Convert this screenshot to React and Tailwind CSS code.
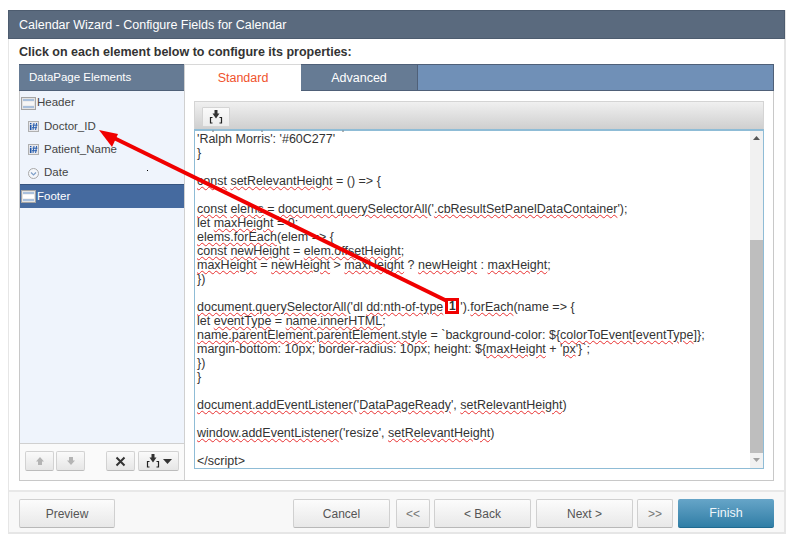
import React from "react";

const codeLines = [
  "'Ralph Morris': '#60C277'",
  "}",
  "",
  "[const] [setRelevantHeight] = () => {",
  "",
  "[const] [elems] = [document.querySelectorAll]('[.cbResultSetPanelDataContainer]');",
  "let [maxHeight] = 0;",
  "[elems.forEach](elem => {",
  "[const] [newHeight] = [elem.offsetHeight];",
  "[maxHeight] = [newHeight] > [maxHeight] ? [newHeight] : [maxHeight];",
  "})",
  "",
  "[document.querySelectorAll]('dl [dd:nth-of-type]{1}').[forEach](name => {",
  "let [eventType] = [name.innerHTML];",
  "[name.parentElement.parentElement.style] = `background-color: ${[colorToEvent][[eventType]]};",
  "margin-bottom: 10px; border-radius: 10px; height: ${[maxHeight] + '[px]'}`;",
  "})",
  "}",
  "",
  "[document.addEventListener]('[DataPageReady]', [setRelevantHeight])",
  "",
  "[window.addEventListener]('resize', [setRelevantHeight])",
  "",
  "</script>",
];

const CodeLine = ({ text }) => {
  const parts = text.split(/(\[[A-Za-z.:\-]+\]|\{1\})/);
  return (
    <div className="h-[14px] whitespace-pre">
      {parts.map((part, i) => {
        if (part === "{1}") {
          return (
            <span
              key={i}
              className="inline-block align-top w-[14px] h-[16px] -mt-[2px] ml-[2px] mr-[1px] border-[3px] border-[#f00000] bg-white text-center leading-[10px] font-bold text-[12px] text-[#333]"
            >
              1
            </span>
          );
        }
        if (/^\[[A-Za-z.:\-]+\]$/.test(part)) {
          return (
            <span
              key={i}
              className="underline decoration-wavy decoration-[#e83030] decoration-1 underline-offset-[1px]"
            >
              {part.slice(1, -1)}
            </span>
          );
        }
        return <span key={i}>{part}</span>;
      })}
    </div>
  );
};

const InsertIcon = () => (
  <svg width="14" height="14" viewBox="0 0 14 14" className="shrink-0">
    <path
      d="M3.5 7.5H1.5v5.5h2M10.5 7.5h2v5.5h-2"
      fill="none"
      stroke="#222"
      strokeWidth="1.2"
    />
    <path d="M5.5 0h3v3.5H10.5L7 8.5 3.5 3.5h2z" fill="#333" />
  </svg>
);

const SectionIcon = ({ light }) => (
  <svg width="15" height="13" viewBox="0 0 15 13" className="shrink-0">
    <rect x="0.5" y="0.5" width="14" height="12" fill="#e4e4e4" stroke="#a4a4a4" />
    <rect x="2" y="2" width="11" height="2" fill="#a9c0dc" />
    <rect x="2" y="9" width="11" height="2" fill="#a9c0dc" />
    <rect x="2" y="4.5" width="11" height="4" fill={light ? "#fff" : "#f6f6f6"} />
  </svg>
);

const FieldIcon = () => (
  <svg width="11" height="11" viewBox="0 0 11 11" className="shrink-0">
    <rect x="0.5" y="0.5" width="10" height="10" fill="#e8e8ec" stroke="#b0b0b0" />
    <path d="M2.7 4v5" stroke="#1f56a8" strokeWidth="1.6" />
    <path d="M2.7 2v1.2" stroke="#1f56a8" strokeWidth="1.4" />
    <path d="M5 9 6 2M7.6 9 8.6 2M4.5 4.2h5M4 6.7h5" stroke="#2a60b0" strokeWidth="1" />
  </svg>
);

const DateIcon = () => (
  <svg width="11" height="11" viewBox="0 0 11 11" className="shrink-0">
    <circle cx="5.5" cy="5.5" r="5" fill="#f4f7fb" stroke="#a8a8a8" />
    <path d="M3 4.5l2.5 2.5L8 4.5" fill="none" stroke="#7f9fc8" strokeWidth="1.2" />
  </svg>
);

const SmallButton = ({ className, children }) => (
  <button className={`flex items-center justify-center h-[20px] rounded-[2px] border border-[#d2d2d2] border-b-[#bcbcbc] bg-gradient-to-b from-[#fafafa] to-[#e6e6e6] ${className}`}>
    {children}
  </button>
);

const FooterButton = ({ className, children }) => (
  <button className={`h-[29px] pt-px rounded-[2px] border border-[#d0d0d0] border-b-[#b8b8b8] bg-gradient-to-b from-[#fcfcfc] to-[#e8e8e8] text-[12px] text-[#555] ${className}`}>
    {children}
  </button>
);

const App = () => {
  return (
    <div className="relative w-[795px] h-[544px] bg-white pt-[10px] pl-[8px] font-['Liberation_Sans',Arial,sans-serif] text-[#333] overflow-hidden">
      <div className="w-[778px] h-[524px] flex flex-col border-r-2 border-l border-b-2 border-[#e6e6e6]">
        <div className="h-[29px] pt-px -ml-px -mr-[1px] shrink-0 flex items-center pl-[10px] bg-[#5a6a7e] border border-[#4d5c6f] text-white text-[12.5px]">
          Calendar Wizard - Configure Fields for Calendar
        </div>

        <div className="flex-1 flex flex-col pl-[10px] pr-[10px]">
          <div className="h-[25px] shrink-0 flex items-center font-bold text-[12.5px] text-[#333] pt-px">
            Click on each element below to configure its properties:
          </div>

          <div className="w-[755px] h-[417px] flex border-b border-l border-r border-[#c8c8c8]">
            <div className="w-[165px] flex flex-col border-r border-[#d0d0d0] bg-[#fafafa]">
              <div className="h-[27px] shrink-0 -ml-px flex items-center pl-[10px] bg-[#667b94] border-t border-b border-[#4f6078] text-white text-[11.5px]">
                DataPage Elements
              </div>
              <div className="h-[353px] shrink-0 bg-[#eff4fc] border-b border-[#d0d0d0] text-[11.5px] text-[#444]">
                <div className="h-[23px] pt-px flex items-center gap-[1px] pl-[1px]">
                  <SectionIcon />
                  <span>Header</span>
                </div>
                <div className="h-[23px] pt-[2px] flex items-center gap-[5px] pl-[8px]">
                  <FieldIcon />
                  <span>Doctor_ID</span>
                </div>
                <div className="h-[23px] pt-[2px] flex items-center gap-[5px] pl-[8px]">
                  <FieldIcon />
                  <span>Patient_Name</span>
                </div>
                <div className="relative h-[24px] pt-[2px] flex items-center gap-[5px] pl-[8px]">
                  <DateIcon />
                  <span>Date</span>
                  <span className="absolute left-[127px] top-[10px] w-px h-px bg-black"></span>
                </div>
                <div className="h-[24px] flex items-center gap-[1px] pl-[1px] bg-[#456a9f] border-t border-[#36547f] text-white">
                  <SectionIcon light />
                  <span>Footer</span>
                </div>
              </div>
              <div className="flex-1 flex items-start pt-[7px] pl-[5px]">
                <SmallButton className="w-[29px]">
                  <svg width="10" height="10" viewBox="0 0 10 10">
                    <path d="M5 1l4 4.5H7V9H3V5.5H1z" fill="#b4b4b4" />
                  </svg>
                </SmallButton>
                <SmallButton className="w-[29px] ml-[2px]">
                  <svg width="10" height="10" viewBox="0 0 10 10">
                    <path d="M5 9L1 4.5h2V1h4v3.5h2z" fill="#b4b4b4" />
                  </svg>
                </SmallButton>
                <SmallButton className="w-[29px] ml-[21px]">
                  <svg width="11" height="11" viewBox="0 0 11 11">
                    <path d="M1.5 1.5l8 8M9.5 1.5l-8 8" stroke="#333" strokeWidth="2" />
                  </svg>
                </SmallButton>
                <SmallButton className="w-[41px] ml-[3px] gap-[3px]">
                  <InsertIcon />
                  <svg width="9" height="5" viewBox="0 0 9 5">
                    <path d="M0 0h9L4.5 5z" fill="#333" />
                  </svg>
                </SmallButton>
              </div>
            </div>

            <div className="flex-1 flex flex-col min-w-0">
              <div className="h-[27px] shrink-0 flex -mr-px text-[12.5px]">
                <div className="w-[116px] flex items-center justify-center bg-white border-t border-[#d8d8d8] text-[#f0532d]">
                  Standard
                </div>
                <div className="w-[117px] pt-px flex items-center justify-center bg-[#667b94] border-t border-b border-r border-[#4f6078] text-white">
                  Advanced
                </div>
                <div className="flex-1 bg-[#7090b7] border-t border-b border-r border-[#4f6078]"></div>
              </div>

              <div className="pl-[9px] pt-[10px] w-[579px]">
                <div className="h-[28px] flex items-start pt-[5px] pl-[7px] bg-gradient-to-b from-[#f0f0f0] to-[#cfcfcf] border-t border-l border-r border-[#d4d4d4]">
                  <button className="w-[28px] h-[20px] flex items-center justify-center rounded-[1px] border border-[#d4d4d4] bg-gradient-to-b from-[#fafafa] to-[#ececec]">
                    <InsertIcon />
                  </button>
                </div>
                <div className="h-[340px] flex border-t-2 border-b border-l-[1.5px] border-r-[1.5px] border-[#8fbcd6] overflow-hidden bg-white">
                  <div className="flex-1 min-w-0 pl-[2px] pt-px text-[12.5px] leading-[14px] text-[#333] overflow-hidden">
                    {codeLines.map((line, i) => (
                      <CodeLine key={i} text={line} />
                    ))}
                  </div>
                  <div className="w-[13px] shrink-0 flex flex-col bg-[#f1f1f1]">
                    <div className="h-[109px] pt-[5px] flex justify-center">
                      <svg width="7" height="4" viewBox="0 0 7 4">
                        <path d="M3.5 0L7 4H0z" fill="#555" />
                      </svg>
                    </div>
                    <div className="flex-1 bg-[#bebebe]"></div>
                    <div className="h-[15px] pt-[5px] flex justify-center">
                      <svg width="7" height="4" viewBox="0 0 7 4">
                        <path d="M0 0h7L3.5 4z" fill="#a0a0a0" />
                      </svg>
                    </div>
                  </div>
                </div>
              </div>
            </div>
          </div>
        </div>

        <div className="h-[42px] shrink-0 flex items-start pt-[7px] pl-[10px] bg-[#f8f8f8] border-t-2 border-[#e8e8e8]">
          <FooterButton className="w-[96px]">Preview</FooterButton>
          <FooterButton className="w-[97px] ml-[178px]">Cancel</FooterButton>
          <FooterButton className="w-[34px] ml-[6px] text-[10px] text-[#777]">&lt;&lt;</FooterButton>
          <FooterButton className="w-[97px] ml-[4px]">&lt; Back</FooterButton>
          <FooterButton className="w-[97px] ml-[5px]">Next &gt;</FooterButton>
          <FooterButton className="w-[36px] ml-[4px] text-[10px] text-[#777]">&gt;&gt;</FooterButton>
          <button className="w-[96px] h-[29px] pt-px ml-[5px] rounded-[2px] border-b border-[#1f6a90] bg-gradient-to-b from-[#66a5c8] to-[#2f7ea6] text-[12.5px] text-[#eef6fa]">
            Finish
          </button>
        </div>
      </div>

      {/* red annotation drawn on top of the screenshot */}
      <svg className="absolute left-0 top-0 pointer-events-none" width="795" height="544">
        <line x1="112" y1="137" x2="447" y2="301" stroke="#f00000" strokeWidth="4" />
        <path d="M99 130L118 134L112 147z" fill="#f00000" />
        <path d="M213 130.5v1.5M262 130.5v1.5M343 130.5v1.5" stroke="#666" strokeWidth="1" />
      </svg>
    </div>
  );
};

export default App;
